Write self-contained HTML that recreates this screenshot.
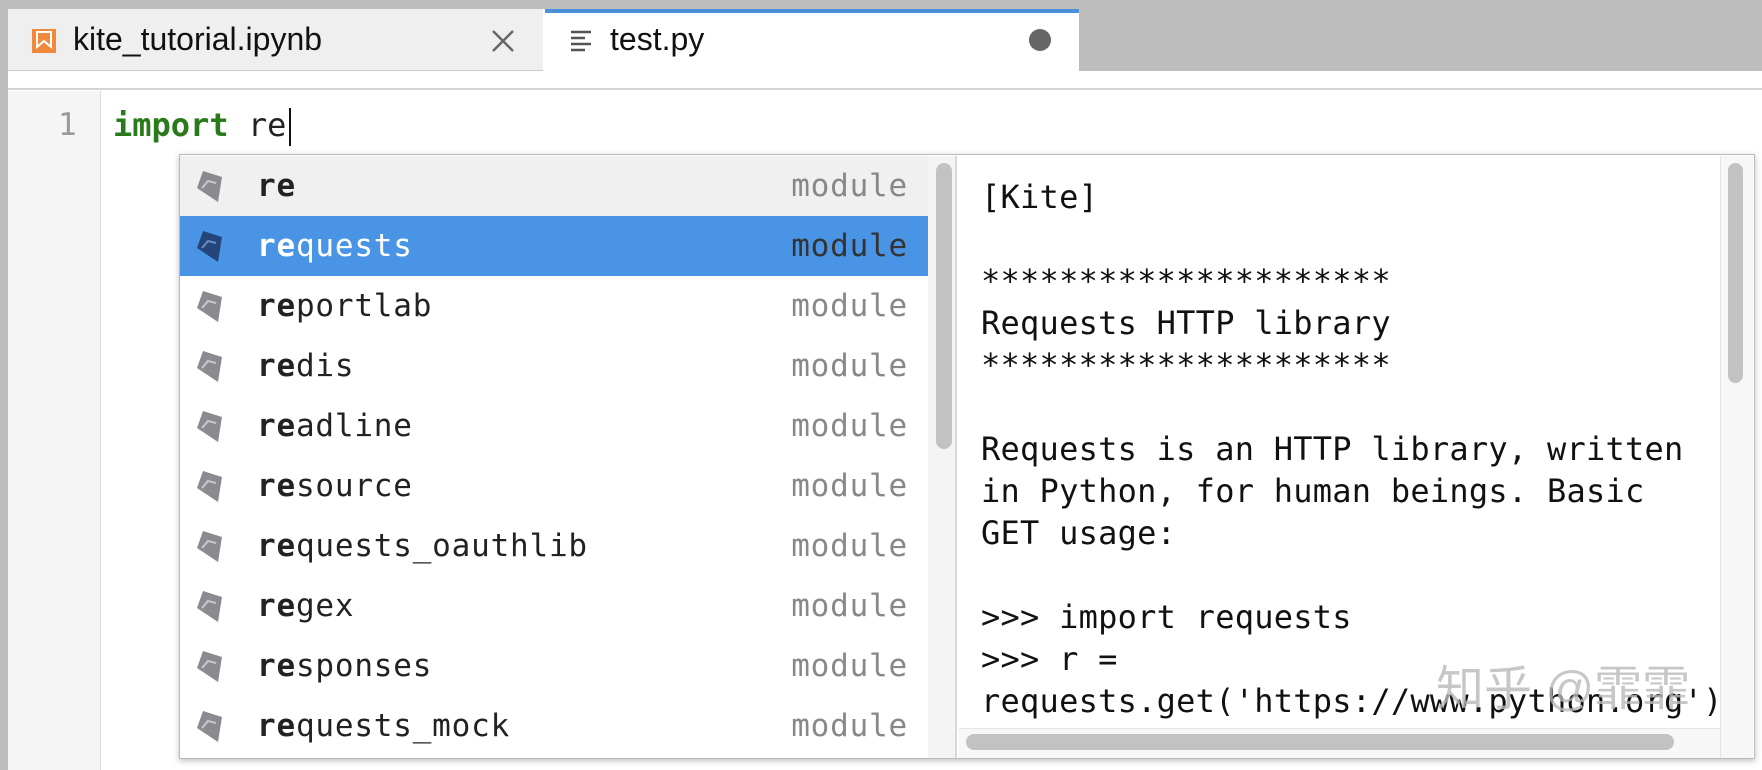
<!DOCTYPE html>
<html><head><meta charset="utf-8"><style>
*{margin:0;padding:0;box-sizing:border-box}
body{width:1762px;height:770px;overflow:hidden;background:#fff;position:relative;font-family:"DejaVu Sans Mono","Liberation Mono",monospace}
.abs{position:absolute}
.row{position:absolute;left:0;width:748px;height:60px}
.row .ic{position:absolute;left:14px;top:12px}
.row .nm{position:absolute;left:77px;top:0;line-height:60px;font-size:31px;color:#222;letter-spacing:0.8px}
.row .nm b{font-weight:bold}
.row .md{position:absolute;right:20px;top:0;line-height:60px;font-size:31px;color:#888;letter-spacing:0.8px}
.doc{position:absolute;left:981px;top:176px;font-size:32px;line-height:42px;color:#111;white-space:pre;letter-spacing:0.25px}
</style></head><body>
<div class="abs" style="left:0;top:0;width:1762px;height:9px;background:#bdbdbd"></div>
<div class="abs" style="left:1079px;top:0;width:683px;height:71px;background:#bdbdbd"></div>
<div class="abs" style="left:0;top:9px;width:8px;height:62px;background:#bdbdbd"></div>
<div class="abs" style="left:8px;top:9px;width:535px;height:62px;background:#efefef;border-bottom:1px solid #ccc"></div>
<div class="abs" style="left:545px;top:9px;width:534px;height:62px;background:#fff;border-top:4px solid #4a90d9"></div>
<svg class="abs" style="left:31px;top:28px" width="26" height="26"><rect x="1" y="1" width="24" height="24" fill="#f08a3a"/><path d="M6 4h14v15l-7-6-7 6z" fill="#f08a3a" stroke="#fff" stroke-width="2"/></svg>
<div class="abs" style="left:73px;top:15px;font-family:'Liberation Sans',sans-serif;font-size:32px;line-height:48px;color:#111">kite_tutorial.ipynb</div>
<svg class="abs" style="left:491px;top:29px" width="24" height="24"><path d="M2 2L22 22M22 2L2 22" stroke="#666" stroke-width="2.5"/></svg>
<svg class="abs" style="left:570px;top:29px" width="24" height="24"><path d="M1 3h20M1 9h14M1 15h20M1 21h14" stroke="#555" stroke-width="2.5"/></svg>
<div class="abs" style="left:610px;top:15px;font-family:'Liberation Sans',sans-serif;font-size:32px;line-height:48px;color:#111">test.py</div>
<div class="abs" style="left:1029px;top:29px;width:22px;height:22px;border-radius:50%;background:#666"></div>
<div class="abs" style="left:8px;top:71px;width:1754px;height:19px;background:#fff;border-bottom:2px solid #d4d4d4"></div>
<div class="abs" style="left:8px;top:91px;width:93px;height:679px;background:#f5f5f5;border-right:1px solid #ddd"></div>
<div class="abs" style="left:0;top:71px;width:8px;height:699px;background:#bdbdbd"></div>
<div class="abs" style="left:58px;top:104px;font-size:31px;line-height:42px;color:#999">1</div>
<div class="abs" style="left:113px;top:104px;font-size:32px;line-height:42px;color:#222;white-space:pre"><b style="color:#2a7a1c">import</b> re</div>
<div class="abs" style="left:289px;top:108px;width:2px;height:38px;background:#111"></div>

<div class="abs" style="left:179px;top:154px;width:1576px;height:605px;background:#fff;border:1px solid #bbb;box-shadow:0 2px 6px rgba(0,0,0,.25)"></div>
<div class="abs" style="left:180px;top:156px;width:748px;height:602px;overflow:hidden">
<div class="row" style="top:0;background:#f0f0f0"><svg class="ic" width="30" height="36"><path d="M9 3L28 9L24 34L3 20Z" fill="#8a8a90"/><path d="M8 20L14 13L22 15" stroke="#c8c8cc" stroke-width="2" fill="none"/></svg><div class="nm"><b>re</b></div><div class="md">module</div></div>
<div class="row" style="top:60px;background:#4a94e6"><svg class="ic" width="30" height="36"><path d="M9 3L28 9L24 34L3 20Z" fill="#24457a"/><path d="M8 20L14 13L22 15" stroke="#6b8cc0" stroke-width="2" fill="none"/></svg><div class="nm" style="color:#fff"><b>re</b>quests</div><div class="md" style="color:#333">module</div></div>
<div class="row" style="top:120px"><svg class="ic" width="30" height="36"><path d="M9 3L28 9L24 34L3 20Z" fill="#8a8a90"/><path d="M8 20L14 13L22 15" stroke="#c8c8cc" stroke-width="2" fill="none"/></svg><div class="nm"><b>re</b>portlab</div><div class="md">module</div></div>
<div class="row" style="top:180px"><svg class="ic" width="30" height="36"><path d="M9 3L28 9L24 34L3 20Z" fill="#8a8a90"/><path d="M8 20L14 13L22 15" stroke="#c8c8cc" stroke-width="2" fill="none"/></svg><div class="nm"><b>re</b>dis</div><div class="md">module</div></div>
<div class="row" style="top:240px"><svg class="ic" width="30" height="36"><path d="M9 3L28 9L24 34L3 20Z" fill="#8a8a90"/><path d="M8 20L14 13L22 15" stroke="#c8c8cc" stroke-width="2" fill="none"/></svg><div class="nm"><b>re</b>adline</div><div class="md">module</div></div>
<div class="row" style="top:300px"><svg class="ic" width="30" height="36"><path d="M9 3L28 9L24 34L3 20Z" fill="#8a8a90"/><path d="M8 20L14 13L22 15" stroke="#c8c8cc" stroke-width="2" fill="none"/></svg><div class="nm"><b>re</b>source</div><div class="md">module</div></div>
<div class="row" style="top:360px"><svg class="ic" width="30" height="36"><path d="M9 3L28 9L24 34L3 20Z" fill="#8a8a90"/><path d="M8 20L14 13L22 15" stroke="#c8c8cc" stroke-width="2" fill="none"/></svg><div class="nm"><b>re</b>quests_oauthlib</div><div class="md">module</div></div>
<div class="row" style="top:420px"><svg class="ic" width="30" height="36"><path d="M9 3L28 9L24 34L3 20Z" fill="#8a8a90"/><path d="M8 20L14 13L22 15" stroke="#c8c8cc" stroke-width="2" fill="none"/></svg><div class="nm"><b>re</b>gex</div><div class="md">module</div></div>
<div class="row" style="top:480px"><svg class="ic" width="30" height="36"><path d="M9 3L28 9L24 34L3 20Z" fill="#8a8a90"/><path d="M8 20L14 13L22 15" stroke="#c8c8cc" stroke-width="2" fill="none"/></svg><div class="nm"><b>re</b>sponses</div><div class="md">module</div></div>
<div class="row" style="top:540px"><svg class="ic" width="30" height="36"><path d="M9 3L28 9L24 34L3 20Z" fill="#8a8a90"/><path d="M8 20L14 13L22 15" stroke="#c8c8cc" stroke-width="2" fill="none"/></svg><div class="nm"><b>re</b>quests_mock</div><div class="md">module</div></div>
</div>
<div class="abs" style="left:928px;top:156px;width:29px;height:602px;background:#f4f4f4;border-right:2px solid #d8d8d8"></div>
<div class="abs" style="left:936px;top:163px;width:16px;height:286px;border-radius:8px;background:#c2c2c2"></div>
<div class="abs" style="left:1720px;top:156px;width:33px;height:602px;background:#f7f7f7;border-left:1px solid #e4e4e4"></div>
<div class="abs" style="left:1728px;top:163px;width:15px;height:220px;border-radius:8px;background:#c2c2c2"></div>
<div class="abs" style="left:959px;top:728px;width:761px;height:30px;background:#f7f7f7;border-top:1px solid #e4e4e4"></div>
<div class="abs" style="left:966px;top:734px;width:708px;height:16px;border-radius:8px;background:#c2c2c2"></div>
<div class="doc">[Kite]

*********************
Requests HTTP library
*********************

Requests is an HTTP library, written
in Python, for human beings. Basic
GET usage:

&gt;&gt;&gt; import requests
&gt;&gt;&gt; r =
requests.get('https://www.python.org')</div>
<div class="abs" style="left:1436px;top:660px;font-family:'Liberation Sans','Noto Sans CJK SC',sans-serif;font-size:48px;line-height:60px;color:rgba(185,185,185,.8);white-space:nowrap">知乎 @霏霏</div>
</body></html>
